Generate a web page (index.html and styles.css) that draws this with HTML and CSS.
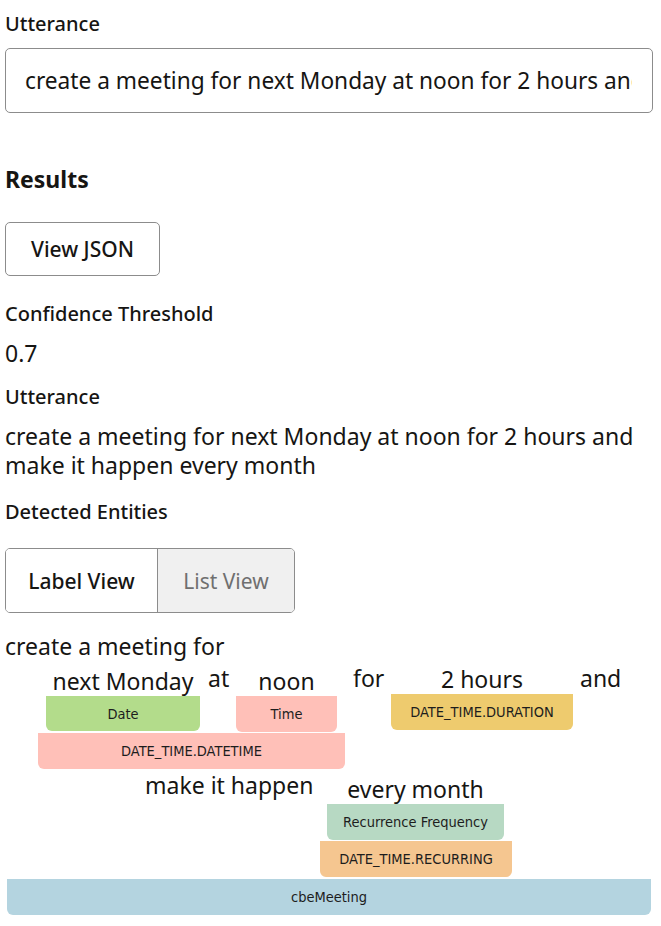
FILE: index.html
```html
<!DOCTYPE html>
<html lang="en">
<head>
<meta charset="utf-8">
<title>Utterance Tester</title>
<link rel="stylesheet" href="styles.css">
</head>
<body>
<main class="page">
  <div class="field-label first">Utterance</div>
  <div class="text-input"><div class="text-input-value">create a meeting for next Monday at noon for 2 hours and make it happen every month</div></div>

  <h2 class="section-title">Results</h2>
  <button class="btn" type="button">View JSON</button>

  <div class="field-label conf">Confidence Threshold</div>
  <div class="value">0.7</div>

  <div class="field-label utt">Utterance</div>
  <p class="utterance">create a meeting for next Monday at noon for 2 hours and make it happen every month</p>

  <div class="field-label ent">Detected Entities</div>
  <div class="toggle">
    <span class="toggle-item active">Label View</span>
    <span class="toggle-item">List View</span>
  </div>

  <div class="label-canvas">
    <span class="word w-create">create a meeting for</span>

    <div class="seg s-date">
      <span class="seg-word">next Monday</span>
      <span class="tag tag-date">Date</span>
    </div>
    <span class="word w-at">at</span>
    <div class="seg s-time">
      <span class="seg-word">noon</span>
      <span class="tag tag-pink">Time</span>
    </div>
    <span class="word w-for">for</span>
    <div class="seg s-dur">
      <span class="seg-word">2 hours</span>
      <span class="tag tag-yellow">DATE_TIME.DURATION</span>
    </div>
    <span class="word w-and">and</span>

    <span class="tag tag-pink t-datetime">DATE_TIME.DATETIME</span>

    <span class="word w-make">make it happen</span>
    <div class="seg s-rec">
      <span class="seg-word">every month</span>
      <span class="tag tag-mint">Recurrence Frequency</span>
    </div>
    <span class="tag tag-orange t-recurring">DATE_TIME.RECURRING</span>
    <span class="tag tag-blue t-cbe">cbeMeeting</span>
  </div>
</main>
</body>
</html>
```

FILE: styles.css
```css
* { box-sizing: border-box; }

html, body {
  margin: 0;
  padding: 0;
  background: #ffffff;
}

body {
  font-family: "Noto Sans", "Open Sans", sans-serif;
  color: #161513;
}

.page {
  padding: 0 8px 0 5px;
}

.field-label {
  font-size: 20px;
  font-weight: 500;
  line-height: 24px;
}

.field-label.first { margin-top: 12px; }
.field-label.conf { margin-top: 26px; }
.field-label.utt { margin-top: 17px; }
.field-label.ent { margin-top: 20px; }

.text-input {
  margin-top: 12px;
  height: 65px;
  border: 1px solid #8c8c8c;
  border-radius: 5px;
  padding: 0 20px 0 19px;
  font-size: 22.7px;
  line-height: 63px;
}

.text-input-value {
  white-space: nowrap;
  overflow: hidden;
}

.section-title {
  margin: 51px 0 0;
  font-size: 23px;
  font-weight: 700;
  line-height: 30px;
}

.btn {
  display: block;
  margin-top: 28px;
  width: 155px;
  height: 54px;
  border: 1px solid #8c8c8c;
  border-radius: 5px;
  background: #ffffff;
  font-family: inherit;
  font-size: 21px;
  font-weight: 500;
  color: #161513;
  padding: 0;
}

.value {
  margin-top: 12px;
  font-size: 23px;
  line-height: 30px;
}

.utterance {
  margin: 13px 0 0;
  font-size: 23px;
  line-height: 29px;
}

.toggle {
  margin-top: 24px;
  display: flex;
  width: 290px;
  height: 65px;
  border: 1px solid #8c8c8c;
  border-radius: 5px;
  overflow: hidden;
}

.toggle-item {
  display: flex;
  align-items: center;
  justify-content: center;
  font-size: 21px;
  color: #6f6f6f;
  background: #f0f0f0;
  flex: 1 1 auto;
}

.toggle-item.active {
  flex: 0 0 152px;
  background: #ffffff;
  color: #161513;
  font-weight: 500;
  border-right: 1px solid #8c8c8c;
}

/* Label view: annotation canvas */
.label-canvas {
  position: relative;
  margin-top: 16px;
  height: 290px;
}

.word,
.seg-word {
  font-size: 23px;
  line-height: 30px;
  white-space: nowrap;
}

.word { position: absolute; }

.seg {
  position: absolute;
  display: flex;
  flex-direction: column;
  align-items: center;
}

.tag {
  display: flex;
  align-items: center;
  justify-content: center;
  height: 36px;
  align-self: stretch;
  border-radius: 0 0 6px 6px;
  font-family: "DejaVu Sans Condensed", "Liberation Sans Narrow", "DejaVu Sans", sans-serif;
  font-stretch: condensed;
  font-size: 14.5px;
  color: #1d1d1d;
  white-space: nowrap;
}

.tag-date   { background: #b3dc8b; height: 35px; }
.tag-pink   { background: #ffc0b8; }
.tag-yellow { background: #eecb6e; }
.tag-mint   { background: #b7d9c3; }
.tag-orange { background: #f5c690; }
.tag-blue   { background: #b4d4e0; }

.w-create { left: 0; top: 2px; }
.w-at     { left: 203px; top: 34px; }
.w-for    { left: 348px; top: 34px; }
.w-and    { left: 575px; top: 34px; }
.w-make   { left: 140px; top: 141px; }

.s-date { left: 41px;  top: 37px;  width: 154px; }
.s-time { left: 231px; top: 37px;  width: 101px; }
.s-dur  { left: 386px; top: 35px;  width: 182px; }
.s-rec  { left: 322px; top: 145px; width: 177px; }

.t-datetime { position: absolute; left: 33px;  top: 104px; width: 307px; }
.t-recurring { position: absolute; left: 315px; top: 212px; width: 192px; }
.t-cbe       { position: absolute; left: 2px;   top: 250px; width: 644px; }
```
